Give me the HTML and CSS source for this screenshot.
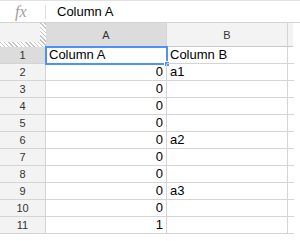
FILE: index.html
```html
<!DOCTYPE html>
<html lang="en">
<head>
    <meta charset="UTF-8">
    <meta name="viewport" content="width=device-width, initial-scale=1.0">
    <title>Sheet</title>
    <link rel="stylesheet" href="styles.css">
</head>
<body>

<div class="formula-bar">
    <span class="fx">fx</span>
    <span class="fx-sep"></span>
    <span class="formula">Column A</span>
</div>

<div class="grid">
    <div class="corner"><div class="corner-inner"></div></div>
    <div class="col-head selected">A</div>
    <div class="col-head">B</div>
    <div class="col-head edge"></div>

    <div class="row-head selected">1</div>
    <div class="cell active">Column A<span class="handle"></span></div>
    <div class="cell">Column B</div>
    <div class="cell edge"></div>

    <div class="row-head">2</div><div class="cell num">0</div><div class="cell">a1</div><div class="cell edge"></div>
    <div class="row-head">3</div><div class="cell num">0</div><div class="cell"></div><div class="cell edge"></div>
    <div class="row-head">4</div><div class="cell num">0</div><div class="cell"></div><div class="cell edge"></div>
    <div class="row-head">5</div><div class="cell num">0</div><div class="cell"></div><div class="cell edge"></div>
    <div class="row-head">6</div><div class="cell num">0</div><div class="cell">a2</div><div class="cell edge"></div>
    <div class="row-head">7</div><div class="cell num">0</div><div class="cell"></div><div class="cell edge"></div>
    <div class="row-head">8</div><div class="cell num">0</div><div class="cell"></div><div class="cell edge"></div>
    <div class="row-head">9</div><div class="cell num">0</div><div class="cell">a3</div><div class="cell edge"></div>
    <div class="row-head">10</div><div class="cell num">0</div><div class="cell"></div><div class="cell edge"></div>
    <div class="row-head">11</div><div class="cell num">1</div><div class="cell"></div><div class="cell edge"></div>
</div>

</body>
</html>
```

FILE: styles.css
```css
* {
    box-sizing: border-box;
}
body {
    margin: 0;
    background-color: white;
    font-family: "Liberation Sans", Arial, sans-serif;
    color: black;
}
.formula-bar {
    display: flex;
    align-items: center;
    height: 23px;
    border-top: 1px solid #e2e2e2;
    border-bottom: 1px solid #d4d4d4;
}
.fx {
    width: 45px;
    padding-left: 15px;
    font-family: "Liberation Serif", serif;
    font-style: italic;
    font-size: 16px;
    color: #a0a0a0;
}
.fx-sep {
    width: 1px;
    height: 14px;
    background-color: #dddddd;
}
.formula {
    padding-left: 11px;
    font-size: 13px;
}
.grid {
    display: grid;
    grid-template-columns: 46px 121px 121px 5px;
    grid-template-rows: 24px repeat(11, 17px);
    width: 293px;
}
.corner {
    background: repeating-linear-gradient(45deg, #c4c4c4 0 1px, white 1px 3px);
}
.corner-inner {
    width: 40px;
    height: 19px;
    background-color: #f3f3f3;
}
.col-head {
    display: flex;
    align-items: center;
    justify-content: center;
    background-color: #f3f3f3;
    border-right: 1px solid #d4d4d4;
    border-bottom: 1px solid #c8c8c8;
    font-size: 11px;
    color: #333;
}
.col-head.selected,
.row-head.selected {
    background-color: #dcdcdc;
}
.col-head.edge {
    border-right: none;
}
.row-head {
    display: flex;
    align-items: center;
    justify-content: center;
    background-color: #f3f3f3;
    border-right: 1px solid #d4d4d4;
    border-bottom: 1px solid #d4d4d4;
    font-size: 11px;
    color: #333;
}
.cell {
    position: relative;
    padding: 0 3px;
    border-right: 1px solid #d4d4d4;
    border-bottom: 1px solid #d4d4d4;
    font-size: 13px;
    line-height: 16px;
    white-space: nowrap;
}
.cell.num {
    text-align: right;
}
.cell.edge {
    border-right: none;
}
.cell.active {
    outline: 2px solid #4d90fe;
    outline-offset: -1px;
}
.handle {
    position: absolute;
    right: -4px;
    bottom: -4px;
    width: 6px;
    height: 6px;
    background-color: #4d90fe;
    border: 1px solid white;
}
```
